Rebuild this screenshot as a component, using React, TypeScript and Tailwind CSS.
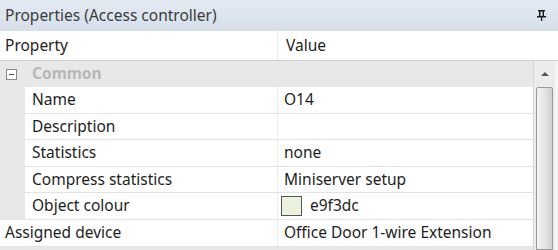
import React from 'react';

const rows: { label: string; value: string; swatch?: boolean }[] = [
  { label: 'Name', value: 'O14' },
  { label: 'Description', value: '' },
  { label: 'Statistics', value: 'none' },
  { label: 'Compress statistics', value: 'Miniserver setup' },
  { label: 'Object colour', value: 'e9f3dc', swatch: true },
];

function Pin() {
  return (
    <svg width="9" height="11" viewBox="0 0 9 11" className="block">
      <rect x="1" y="0" width="7" height="1.5" fill="#1a1a1a" />
      <rect x="2" y="0" width="1.5" height="7" fill="#1a1a1a" />
      <rect x="5.5" y="0" width="1.5" height="7" fill="#1a1a1a" />
      <rect x="0" y="6" width="9" height="1.5" fill="#1a1a1a" />
      <rect x="4" y="7" width="1.2" height="4" fill="#1a1a1a" />
    </svg>
  );
}

export default function App() {
  return (
    <div
      className="w-[558px] h-[250px] overflow-hidden bg-white text-[15.5px] text-[#1e1e1e] flex flex-col"
      style={{ fontFamily: '"Noto Sans", "Open Sans", sans-serif' }}
    >
      {/* title */}
      <div className="h-[31px] shrink-0 flex items-center justify-between pl-[5px] pr-[12px] bg-gradient-to-b from-[#e4eaf2] to-[#d6dfea] text-[#3c3c3c]">
        <span>Properties (Access controller)</span>
        <Pin />
      </div>

      {/* header */}
      <div className="h-[30px] shrink-0 flex border-b border-[#cfcfcf]">
        <div className="w-[278px] pl-[5px] flex items-center border-r border-[#ececec]">Property</div>
        <div className="flex-1 pl-[8px] flex items-center">Value</div>
      </div>

      <div className="flex flex-1 min-h-0">
        <div className="flex-1 flex flex-col">
          {/* category */}
          <div className="h-[26px] shrink-0 flex items-center bg-[#e8e8e8] pl-[6px]">
            <span className="w-[11px] h-[11px] border border-[#888] bg-white flex items-center justify-center">
              <span className="w-[5px] h-[1px] bg-[#444]" />
            </span>
            <span className="ml-[15px] font-bold text-[#b8b8b8]">Common</span>
          </div>

          <div className="flex">
            <div className="w-[25px] bg-[#e8e8e8]" />
            <div className="flex-1 flex flex-col">
              {rows.map((r) => (
                <div key={r.label} className="h-[26.5px] shrink-0 flex border-b border-[#e2e2e2]">
                  <div className="w-[253px] pl-[7px] flex items-center border-r border-[#ececec]">{r.label}</div>
                  <div className="flex-1 pl-[6px] flex items-center">
                    {r.swatch && (
                      <span className="w-[21px] h-[20px] -ml-[3px] border border-[#555] bg-[#e9f3dc] mr-[8px]" />
                    )}
                    {r.value}
                  </div>
                </div>
              ))}
            </div>
          </div>

          <div className="h-[27px] shrink-0 flex border-b border-[#e2e2e2]">
            <div className="w-[278px] pl-[5px] flex items-center border-r border-[#ececec]">Assigned device</div>
            <div className="flex-1 pl-[6px] flex items-center">Office Door 1-wire Extension</div>
          </div>
          <div className="flex-1 bg-[#e8e8e8]" />
        </div>

        {/* scrollbar */}
        <div className="w-[22px] bg-[#ececec] border-l border-[#d8d8d8] flex flex-col items-center">
          <div className="h-[26px] flex items-center justify-center">
            <span className="w-0 h-0 border-l-[4px] border-r-[4px] border-b-[4px] border-l-transparent border-r-transparent border-b-[#555]" />
          </div>
          <div className="flex-1 w-[17px] rounded-t-[2px] border border-[#9a9a9a] bg-gradient-to-r from-[#f2f2f2] via-[#e6e6e6] to-[#cfcfcf]" />
        </div>
        <div className="w-[3px] bg-[#f4f6f9]" />
      </div>
    </div>
  );
}
